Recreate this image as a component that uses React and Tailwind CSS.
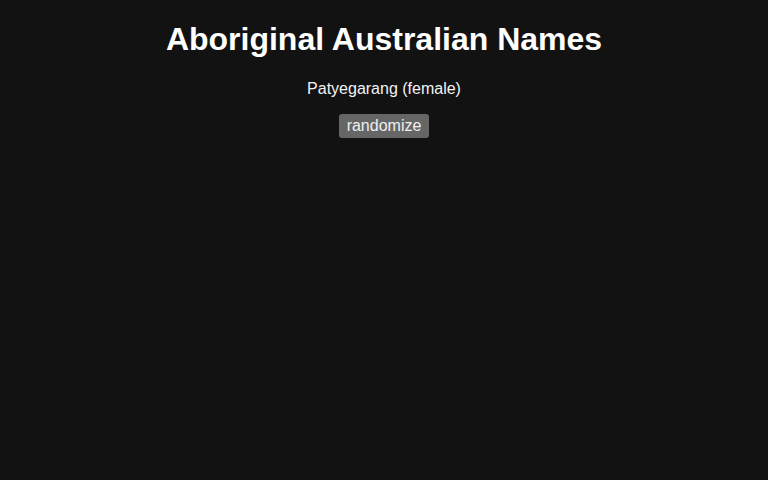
import React, { useState } from 'react';

const NAMES = [
    ['Patyegarang', 'female'],
    ['Bennelong', 'male'],
    ['Barangaroo', 'female'],
    ['Pemulwuy', 'male'],
    ['Yindi', 'female'],
    ['Jarrah', 'male'],
];

export default function App() {
    const [idx, setIdx] = useState(0);
    const [name, gender] = NAMES[idx];

    // pick any entry other than the current one
    const randomize = () => {
        let next = idx;
        while (next === idx) next = Math.floor(Math.random() * NAMES.length);
        setIdx(next);
    };

    return (
        <div className="min-h-[480px] bg-[#121212] text-white text-center font-['Liberation_Sans',Arial,sans-serif] pt-[21px]">
            <h1 className="text-[32px] font-bold leading-[37px]">Aboriginal Australian Names</h1>
            <p className="mt-[22px] text-[16px] leading-[18px] text-[#f2f2f2]">
                {name} ({gender})
            </p>
            <button
                onClick={randomize}
                className="mt-[16px] bg-[#666666] text-[#f0f0f0] text-[16px] leading-[18px] px-[8px] py-[3px] rounded-[3px]"
            >
                randomize
            </button>
        </div>
    );
}
